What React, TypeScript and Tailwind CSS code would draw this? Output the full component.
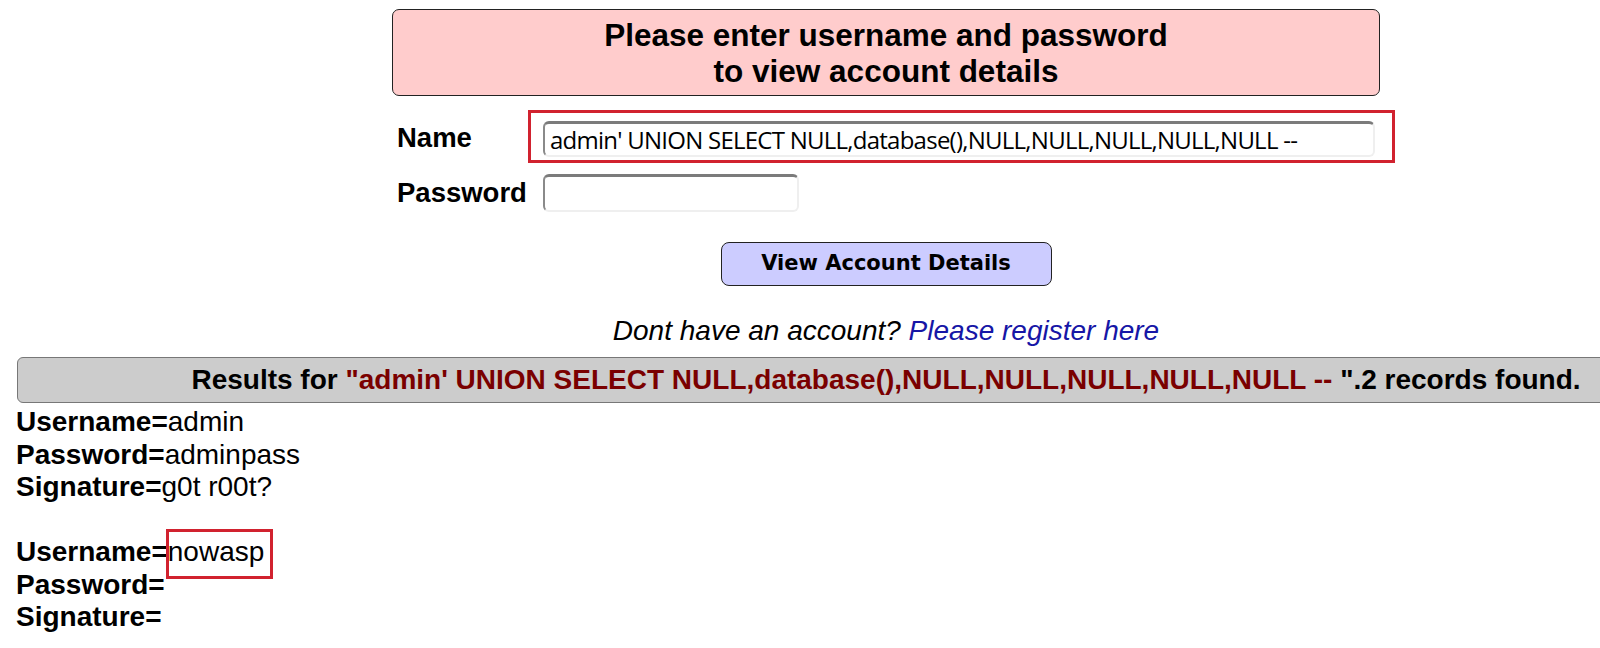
import { useState } from 'react'

const records = [
  { username: 'admin', password: 'adminpass', signature: 'g0t r00t?' },
  { username: 'nowasp', password: '', signature: '' },
]

const query = "admin' UNION SELECT NULL,database(),NULL,NULL,NULL,NULL,NULL --"

export default function App() {
  const [name, setName] = useState(query)
  const [password, setPassword] = useState('')

  return (
    <div className="w-[1600px] h-[648px] overflow-hidden bg-white text-black font-['Liberation_Sans',Arial,sans-serif]">
      {/* login form */}
      <div className="ml-[392px] w-[988px] pt-[9px]">
        <div className="h-[87px] rounded-[7px] border border-[#222] bg-[#ffcccc] flex flex-col items-center justify-center text-[31.5px] leading-[36px] font-bold">
          <div>Please enter username and password</div>
          <div>to view account details</div>
        </div>

        <div className="mt-[14px] flex items-center">
          <label className="w-[136px] shrink-0 pl-[5px] pt-[3px] text-[27.5px] leading-[32px] font-bold">Name</label>
          <div className="shrink-0 border-[3px] border-[#d1222f] pt-[8px] pb-[3px] pl-[12px] pr-[17px]">
            <input
              value={name}
              onChange={(e) => setName(e.target.value)}
              className="block w-[832px] h-[36px] rounded-[6px] border-2 border-t-[3px] border-t-[#7b7b7b] border-l-[#8a8a8a] border-r-[#efefef] border-b-[#efefef] bg-white pl-[5px] text-[24px] tracking-[-0.75px] font-['Open_Sans',sans-serif] outline-none"
            />
          </div>
        </div>

        <div className="mt-[11px] flex items-center">
          <label className="w-[151px] shrink-0 pl-[5px] text-[27.5px] leading-[32px] font-bold">Password</label>
          <input
            type="password"
            value={password}
            onChange={(e) => setPassword(e.target.value)}
            className="block w-[256px] h-[38px] rounded-[6px] border-2 border-t-[3px] border-t-[#7b7b7b] border-l-[#8a8a8a] border-r-[#efefef] border-b-[#efefef] bg-white outline-none"
          />
        </div>

        <div className="mt-[30px] flex justify-center">
          <button className="w-[331px] h-[44px] rounded-[8px] border-[1.5px] border-[#222] bg-[#ccccff] text-[21px] font-bold font-['DejaVu_Sans',Verdana,sans-serif]">
            View Account Details
          </button>
        </div>

        <div className="mt-[29px] text-center italic text-[28px] leading-[32px]">
          Dont have an account? <a className="text-[#1616a6]">Please register here</a>
        </div>
      </div>

      {/* results */}
      <div className="mt-[10px] ml-[17px] w-[1738px] h-[46px] rounded-[6px] border-[1.5px] border-[#777] bg-[#cccccc] flex items-center justify-center text-[28px] font-bold whitespace-nowrap">
        <span>
          Results for <span className="text-[#7a0000]">"{query} </span>".2 records found.
        </span>
      </div>

      <div className="pl-[16px] pt-[3px] text-[28px] leading-[32.5px]">
        {records.map((r, i) => (
          <div key={r.username}>
            {i > 0 && <br />}
            <div>
              <b>Username=</b>
              {i === 1 ? (
                <span className="relative">
                  {r.username}
                  <span className="absolute -left-[2px] -right-[9px] -top-[7px] -bottom-[12px] border-[3px] border-[#d1222f]" />
                </span>
              ) : (
                r.username
              )}
            </div>
            <div>
              <b>Password=</b>
              {r.password}
            </div>
            <div>
              <b>Signature=</b>
              {r.signature}
            </div>
          </div>
        ))}
      </div>
    </div>
  )
}
